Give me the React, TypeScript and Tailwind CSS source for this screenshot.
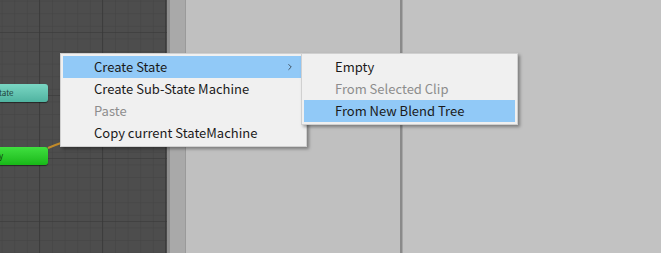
import { ChevronRight } from 'lucide-react';

const mainItems = [
  { label: 'Create State', active: true, disabled: false, sub: true },
  { label: 'Create Sub-State Machine', active: false, disabled: false, sub: false },
  { label: 'Paste', active: false, disabled: true, sub: false },
  { label: 'Copy current StateMachine', active: false, disabled: false, sub: false },
];

const subItems = [
  { label: 'Empty', active: false, disabled: false },
  { label: 'From Selected Clip', active: false, disabled: true },
  { label: 'From New Blend Tree', active: true, disabled: false },
];

function GridCanvas() {
  return (
    <svg className="absolute inset-0" width="167" height="253">
      <defs>
        <pattern id="minor" x="-10" y="-11" width="12.6" height="12.6" patternUnits="userSpaceOnUse">
          <path d="M12.6 0V12.6M0 12.6H12.6" stroke="#434343" strokeWidth="1" fill="none" />
        </pattern>
        <pattern id="major" x="-23" y="-30" width="63" height="63" patternUnits="userSpaceOnUse">
          <path d="M63 0V63M0 63H63" stroke="#353535" strokeWidth="1.2" fill="none" />
        </pattern>
      </defs>
      <rect width="167" height="253" fill="#4d4d4d" />
      <rect width="167" height="253" fill="url(#minor)" />
      <rect width="167" height="253" fill="url(#major)" />
      <path d="M48 148 Q55 145 61 143" stroke="#c08a2a" strokeWidth="2" fill="none" />
    </svg>
  );
}

export default function App() {
  return (
    <div
      className="relative flex w-[661px] h-[253px] overflow-hidden bg-[#c2c2c2] text-[13px]"
      style={{ fontFamily: '"Noto Sans CJK SC", "Noto Sans", sans-serif' }}
    >
      {/* graph canvas */}
      <div className="relative w-[167px] h-full shrink-0">
        <GridCanvas />
        <div className="absolute left-0 top-[84px] w-[48px] h-[18px] rounded-r-[3px] bg-gradient-to-b from-[#7ad7c4] to-[#4fb3a0] shadow-[0_1px_1px_rgba(0,0,0,0.5)] flex items-center text-[8px] text-[#1d3d37] leading-none">
          <span className="-ml-[1px]">tate</span>
        </div>
        <div className="absolute left-0 top-[147px] w-[48px] h-[18px] rounded-r-[3px] bg-gradient-to-b from-[#3fe03f] to-[#17b817] shadow-[0_1px_1px_rgba(0,0,0,0.5)] flex items-center text-[8px] text-[#0f3a0f] leading-none">
          <span className="-ml-[1px]">y</span>
        </div>
      </div>

      {/* splitter */}
      <div className="w-[3px] h-full bg-[#8e8e8e] shrink-0" />
      <div className="w-[16px] h-full bg-[#a9a9a9] border-r border-[#9a9a9a] shrink-0" />

      {/* middle panel */}
      <div className="w-[214px] h-full bg-[#c0c0c0] shrink-0" />
      <div className="w-[3px] h-full bg-[#8a8a8a] border-r border-[#a6a6a6] shrink-0" />
      <div className="flex-1 h-full bg-[#c2c2c2]" />

      {/* context menu */}
      <div className="absolute left-[60px] top-[53px] w-[247px] bg-[#f0f0f0] border border-[#d0d0d0] p-[2px] shadow-[2px_2px_3px_rgba(0,0,0,0.35)]">
        {mainItems.map((it) => (
          <div
            key={it.label}
            className={`relative h-[22px] flex items-center pl-[31px] ${it.active ? 'bg-[#91c9f7]' : ''} ${it.disabled ? 'text-[#8d8d8d]' : 'text-[#1a1a1a]'}`}
          >
            {it.label}
            {it.sub && <ChevronRight className="absolute right-[9px] top-[6px]" size={10} strokeWidth={1.6} />}
          </div>
        ))}
      </div>

      {/* submenu */}
      <div className="absolute left-[301px] top-[53px] w-[217px] bg-[#f0f0f0] border border-[#d0d0d0] p-[2px] shadow-[2px_2px_3px_rgba(0,0,0,0.35)]">
        {subItems.map((it) => (
          <div
            key={it.label}
            className={`h-[22px] flex items-center pl-[31px] ${it.active ? 'bg-[#91c9f7]' : ''} ${it.disabled ? 'text-[#8d8d8d]' : 'text-[#1a1a1a]'}`}
          >
            {it.label}
          </div>
        ))}
      </div>
    </div>
  );
}
